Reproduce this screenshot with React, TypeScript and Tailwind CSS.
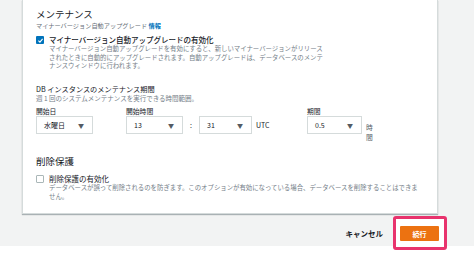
import React from 'react';

const jp = { fontFamily: '"Noto Sans CJK JP", "Noto Sans", sans-serif' };

const Select = ({ value, w }: { value: string; w: string }) => (
  <div className={`${w} h-[18px] flex items-center justify-between bg-white border border-[#d5dbdb] pl-[7px] pr-[8px] text-[7px] text-[#16191f]`}>
    <span>{value}</span>
    <span className="text-[6px] text-[#545b64]">▼</span>
  </div>
);

const Check = ({ on }: { on?: boolean }) =>
  on ? (
    <div className="w-[8px] h-[8px] rounded-[1px] bg-[#0073bb] flex items-center justify-center shrink-0 mt-[1px]">
      <svg viewBox="0 0 10 10" className="w-[7px] h-[7px]">
        <path d="M2 5.2 L4.2 7.3 L8 2.8" stroke="white" strokeWidth="1.6" fill="none" />
      </svg>
    </div>
  ) : (
    <div className="w-[8px] h-[8px] rounded-[1px] bg-white border border-[#aab7b8] shrink-0 mt-[1px]" />
  );

export default function App() {
  return (
    <div style={jp} className="w-[474px] h-[266px] bg-white overflow-hidden">
      <div className="h-[246px] bg-[#f2f3f3] relative">
        <div className="ml-[22px] w-[416px] bg-white border-x border-b border-[#d5dbdb] shadow-[0_1px_1px_rgba(0,28,36,0.3)] pl-[13px] pr-[12px] pt-[7px] pb-[12px]">
          <div className="text-[9.5px] leading-[14px] text-[#16191f]">メンテナンス</div>
          <div className="text-[6.2px] leading-[9px] text-[#687078]">
            マイナーバージョン自動アップグレード <span className="text-[#0073bb] font-bold">情報</span>
          </div>
          <div className="flex gap-[5px] mt-[5px]">
            <Check on />
            <div>
              <div className="text-[7.5px] leading-[10px] font-medium text-[#16191f]">マイナーバージョン自動アップグレードの有効化</div>
              <div className="text-[6.4px] leading-[8.6px] text-[#737d87] whitespace-nowrap">
                マイナーバージョン自動アップグレードを有効にすると、新しいマイナーバージョンがリリース
                <br />
                されたときに自動的にアップグレードされます。自動アップグレードは、データベースのメンテ
                <br />
                ナンスウィンドウに行われます。
              </div>
            </div>
          </div>

          <div className="text-[7.2px] leading-[10px] text-[#16191f] mt-[13.5px]">DB インスタンスのメンテナンス期間</div>
          <div className="text-[6.5px] leading-[9px] text-[#737d87]">週 1 回のシステムメンテナンスを実行できる時間範囲。</div>
          <div className="flex items-start mt-[3px] text-[#16191f]">
            <div className="w-[90px]">
              <div className="text-[6.8px] leading-[10px]">開始日</div>
              <Select value="水曜日" w="w-[57px]" />
            </div>
            <div>
              <div className="text-[6.8px] leading-[10px]">開始時間</div>
              <div className="flex items-center">
                <Select value="13" w="w-[57px]" />
                <span className="text-[7px] w-[16px] text-center">:</span>
                <Select value="31" w="w-[53px]" />
                <span className="text-[7px] ml-[4px] w-[51px]">UTC</span>
              </div>
            </div>
            <div>
              <div className="text-[6.8px] leading-[10px]">期間</div>
              <div className="flex items-start">
                <Select value="0.5" w="w-[55px]" />
                <div className="text-[6.8px] leading-[10px] ml-[4px] mt-[6px] text-[#545b64]">
                  <div>時</div>
                  <div>間</div>
                </div>
              </div>
            </div>
          </div>

          <div className="text-[9.5px] leading-[14px] text-[#16191f] mt-[12px]">削除保護</div>
          <div className="flex gap-[5px] mt-[6px]">
            <Check />
            <div>
              <div className="text-[7.5px] leading-[10px] text-[#16191f]">削除保護の有効化</div>
              <div className="text-[6.4px] leading-[8.6px] text-[#737d87] whitespace-nowrap">
                データベースが誤って削除されるのを防ぎます。このオプションが有効になっている場合、データベースを削除することはできま
                <br />
                せん。
              </div>
            </div>
          </div>
        </div>

        <div className="flex items-center justify-end pr-[35px] mt-[12px]">
          <span className="text-[7.5px] font-bold text-[#16191f] mr-[17px]">キャンセル</span>
          <div className="relative">
            <div className="absolute -left-[7px] -top-[10px] w-[54px] h-[34px] border-[3px] border-[#e8336d] rounded-[3px] bg-white" />
            <div className="relative w-[39px] h-[15px] bg-[#ec7211] flex items-center justify-center text-white text-[7px] font-bold rounded-[1px]">
              続行
            </div>
          </div>
        </div>
      </div>
    </div>
  );
}
